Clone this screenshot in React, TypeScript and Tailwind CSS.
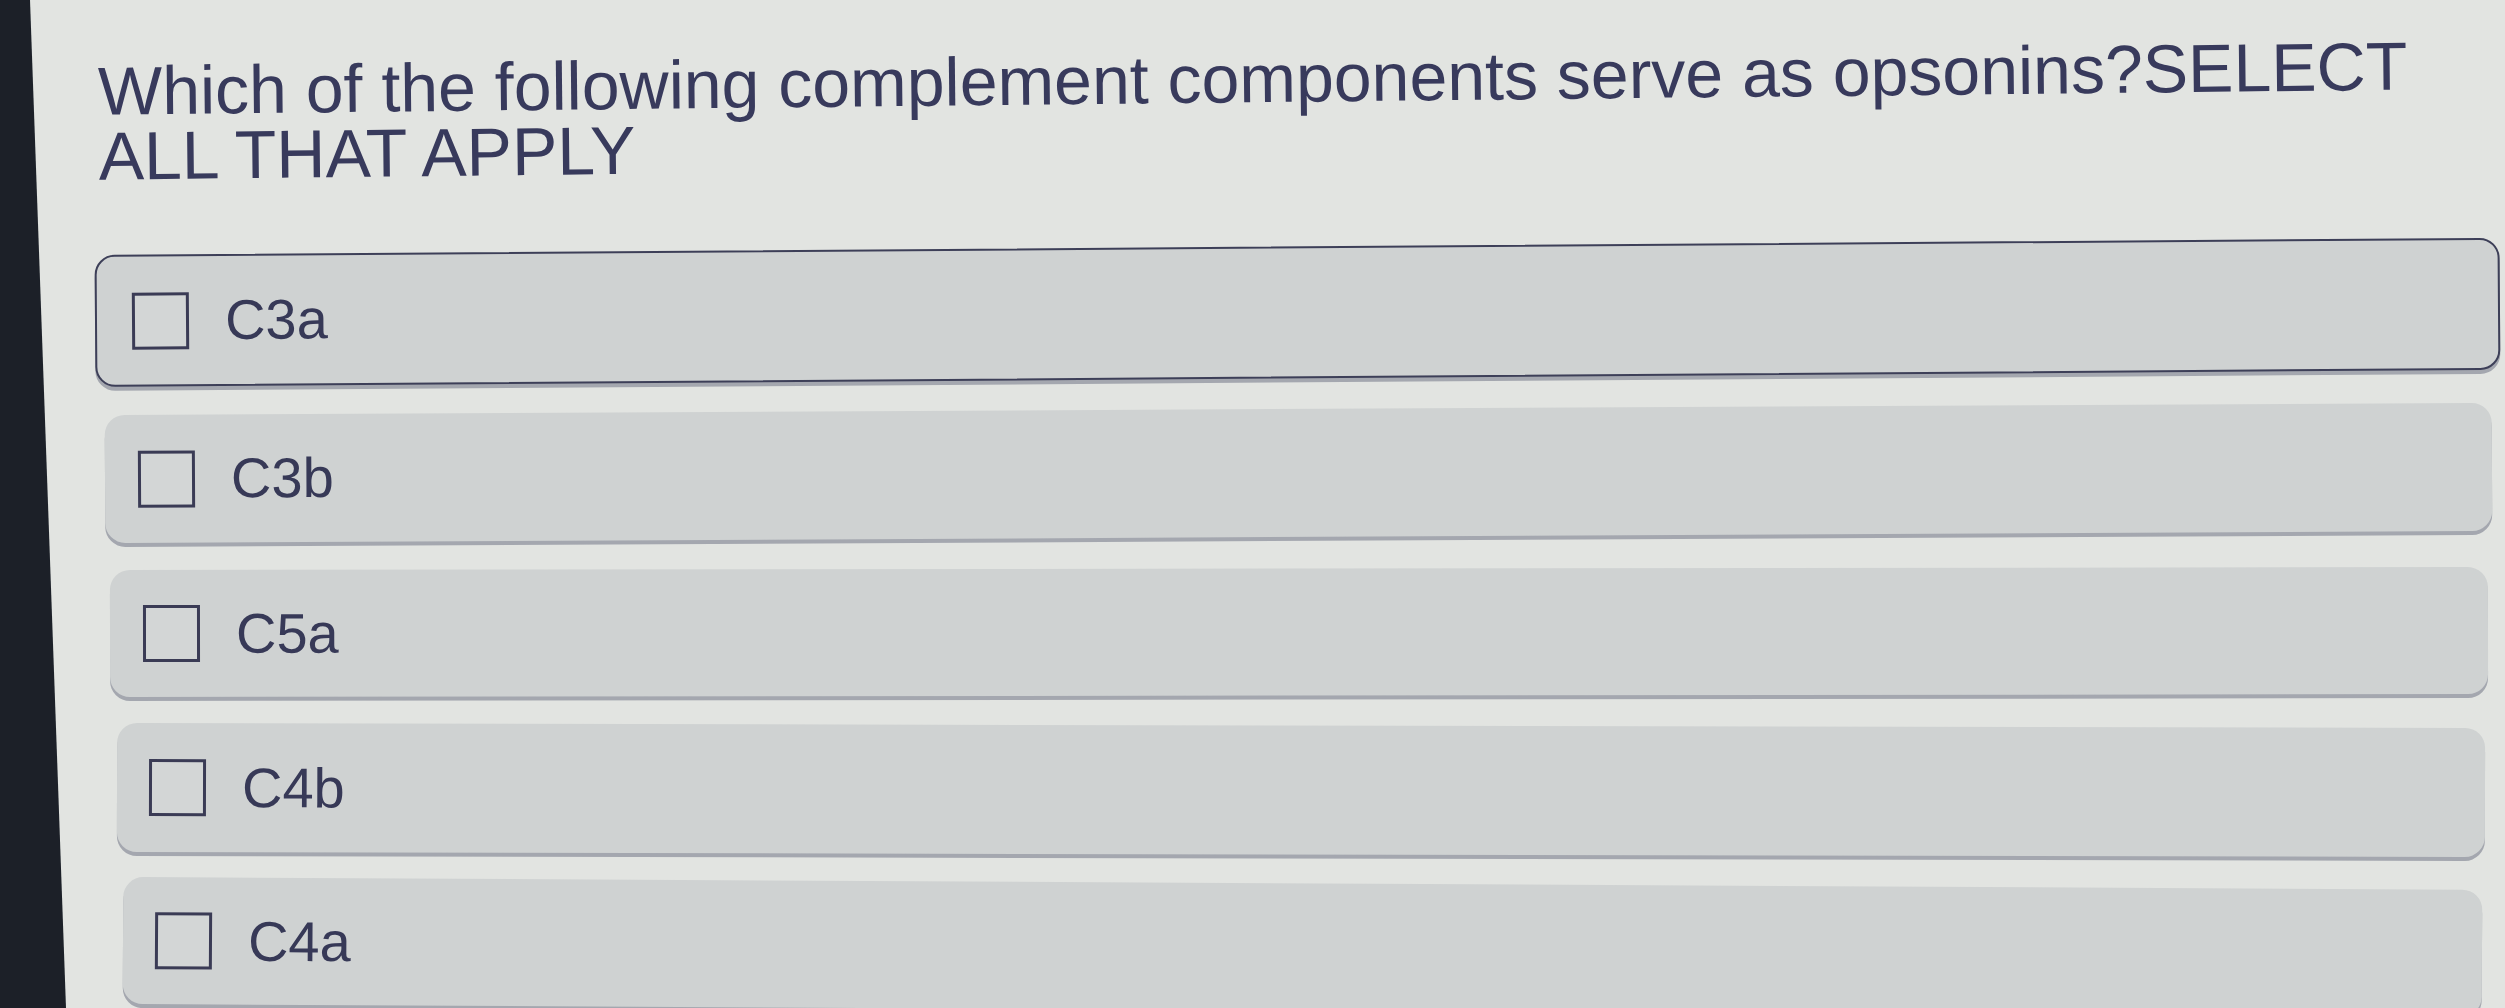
import React from 'react';

type Choice = {
  id: string;
  label: string;
  box: string;
};

// each row sits a little further in on both sides as the list goes down,
// with the slight tilt of the screen it is shown on
const choices: Choice[] = [
  { id: 'c3a', label: 'C3a', box: 'mt-[66px] ml-[29px] mr-[5px] h-[132px] border-2 border-[#3d3f58] pl-[35px] rotate-[-0.41deg]' },
  { id: 'c3b', label: 'C3b', box: 'mt-[28px] ml-[39px] mr-[13px] h-[128px] pl-[33px] rotate-[-0.29deg]' },
  { id: 'c5a', label: 'C5a', box: 'mt-[27px] ml-[44px] mr-[17px] h-[127px] pl-[33px] rotate-[-0.07deg]' },
  { id: 'c4b', label: 'C4b', box: 'mt-[26px] ml-[51px] mr-[20px] h-[129px] pl-[32px] rotate-[0.12deg]' },
  { id: 'c4a', label: 'C4a', box: 'mt-[25px] ml-[57px] mr-[23px] h-[127px] pl-[32px] rotate-[0.31deg] bg-[#cbcfd0]' },
];

const ChoiceRow: React.FC<{ choice: Choice }> = ({ choice }) => (
  <label
    className={`flex items-center gap-[36px] origin-left rounded-[20px] bg-[#cfd2d2] shadow-[0_4px_0_#a4a7af] cursor-pointer ${choice.box}`}
  >
    <span className="w-[57px] h-[57px] shrink-0 border-[3px] border-[#3a3b55] bg-[#d3d6d6]" />
    <span className="text-[56px] leading-none text-[#373957]">{choice.label}</span>
  </label>
);

const App: React.FC = () => {
  return (
    <div
      className="w-[2505px] h-[1008px] overflow-hidden flex bg-[#e2e4e1]"
      style={{ fontFamily: '"Liberation Sans", Arial, sans-serif' }}
    >
      {/* screen bezel on the left edge */}
      <aside className="w-[66px] h-full shrink-0">
        <div className="h-full bg-[#1c2028] [clip-path:polygon(0_0,30px_0,66px_100%,0_100%)]" />
      </aside>

      <main className="flex-1 min-w-0">
        <h1 className="pt-[59px] pl-[32px] pr-[40px] text-[68px] leading-[65px] font-normal text-[#383a5c] origin-left rotate-[-0.62deg]">
          Which of the following complement components serve as opsonins?SELECT ALL THAT APPLY
        </h1>

        <div className="flex flex-col">
          {choices.map((c) => (
            <ChoiceRow key={c.id} choice={c} />
          ))}
        </div>
      </main>
    </div>
  );
};

export default App;
